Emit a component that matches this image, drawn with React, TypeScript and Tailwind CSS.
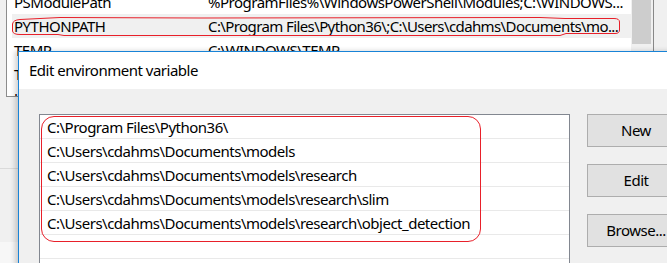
import React from 'react'

const bgRows = [
  { name: 'PSModulePath', value: '%ProgramFiles%\\WindowsPowerShell\\Modules;C:\\WINDOWS...' },
  { name: 'PYTHONPATH', value: 'C:\\Program Files\\Python36\\;C:\\Users\\cdahms\\Documents\\mo...', selected: true },
  { name: 'TEMP', value: 'C:\\WINDOWS\\TEMP' },
  { name: 'TMP', value: 'C:\\WINDOWS\\TEMP' },
  { name: 'USERNAME', value: 'SYSTEM' },
]

const paths = [
  'C:\\Program Files\\Python36\\',
  'C:\\Users\\cdahms\\Documents\\models',
  'C:\\Users\\cdahms\\Documents\\models\\research',
  'C:\\Users\\cdahms\\Documents\\models\\research\\slim',
  'C:\\Users\\cdahms\\Documents\\models\\research\\object_detection',
  '',
]

const font = { fontFamily: '"Segoe UI", "Noto Sans", "Open Sans", sans-serif' }

export default function App() {
  return (
    <div className="relative w-[667px] h-[263px] overflow-hidden bg-white text-black tracking-[-0.5px]" style={font}>
      {/* Background window: environment variables list */}
      <div className="flex h-[97px]">
        <div className="w-[6px] bg-[#f0f0f0]" />
        <div className="flex flex-1 border-l border-b border-[#8c8c8c] bg-white">
          <div className="flex-1 pl-[5px] -mt-[10px] overflow-hidden">
            {bgRows.map((r) => (
              <div
                key={r.name}
                className={`flex h-[24px] items-center text-[15px] leading-none whitespace-nowrap ${r.selected ? 'bg-[#f0f0f0]' : ''}`}
              >
                <span className="w-[196px] shrink-0 pl-[2px]">{r.name}</span>
                <span className={r.selected ? 'tracking-[-0.6px]' : ''}>{r.value}</span>
              </div>
            ))}
          </div>
          {/* scrollbar */}
          <div className="w-[22px] bg-[#f0f0f0] pl-[1px]">
            <div className="w-[19px] h-[44px] bg-[#cdcdcd]" />
          </div>
        </div>
        <div className="w-[14px] border-l border-[#888] bg-[#f0f0f0]" />
      </div>

      {/* left strip below the background list */}
      <div className="w-[18px] h-[166px] flex flex-col">
        <div className="h-[72px] bg-[#f0f0f0] border-b border-[#dadada]" />
        <div className="h-[73px] bg-[#f0f0f0]" />
        <div className="flex-1 bg-[#f7f7f7]" />
      </div>

      {/* Edit environment variable dialog */}
      <div className="absolute left-[18px] top-[51px] w-[700px] h-[240px] border-l border-t border-[#1883d7] bg-[#f0f0f0] shadow-[-3px_0_5px_rgba(0,0,0,0.18)]">
        <div className="h-[37px] bg-white flex items-center pl-[10px] text-[15px]">Edit environment variable</div>
        <div className="flex pl-[20px] pt-[25px]">
          <div className="relative w-[531px] h-[200px] border border-[#828790] bg-white">
            {paths.map((p, i) => (
              <div key={i} className="h-[24px] border-b border-[#e9e9e9] flex items-center pl-[7px] pt-[2px] text-[15px] leading-none whitespace-nowrap">
                {p}
              </div>
            ))}
            {/* red annotation */}
            <div className="absolute left-[1px] top-[1px] w-[440px] h-[126px] border border-[#e8202a] rounded-[13px]" />
          </div>
          <div className="flex flex-col gap-[17px] ml-[17px]">
            {['New', 'Edit', 'Browse...'].map((b) => (
              <div key={b} className="w-[98px] h-[33px] bg-[#e1e1e1] border border-[#adadad] flex items-center justify-center text-[15px]">
                {b}
              </div>
            ))}
          </div>
        </div>
      </div>

      {/* red annotation around PYTHONPATH row */}
      <svg className="absolute left-0 top-0" width="667" height="60" viewBox="0 0 667 60">
        <path
          d="M20,19.5 Q13,20 12.5,24 L12.5,31 Q13,34.5 20,34.5 L58,34.5 L64,35.5 L560,35.5 L566,33.5 L615,33.5 Q619.5,33.5 619.5,30 L619.5,22 Q619.5,18.5 614,18.5 L565,18.5 L540,17.5 L200,18 L60,17.5 Z"
          fill="none"
          stroke="#e8202a"
          strokeWidth="1"
        />
      </svg>
    </div>
  )
}
